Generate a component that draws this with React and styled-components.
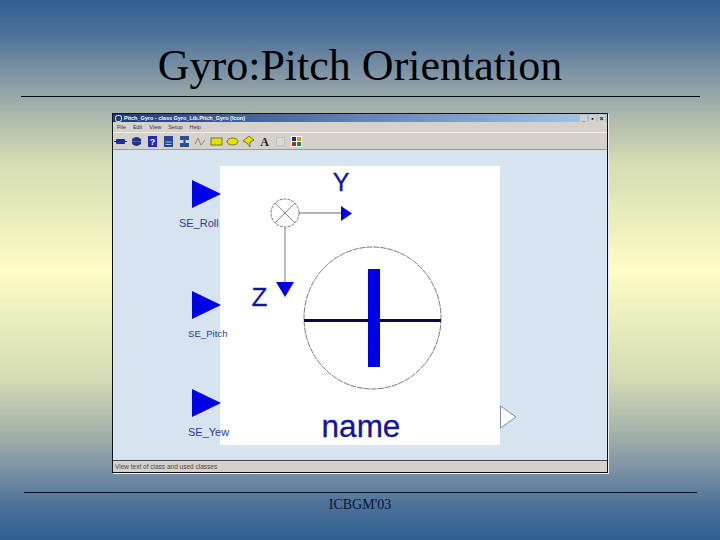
import React from "react";
import styled, { createGlobalStyle } from "styled-components";

const GlobalStyle = createGlobalStyle`
  html, body {
    margin: 0;
    padding: 0;
  }
`;

const Slide = styled.div`
  width: 720px;
  height: 540px;
  overflow: hidden;
  display: flex;
  flex-direction: column;
  align-items: center;
  font-family: "Liberation Serif", serif;
  background-image: linear-gradient(
    180deg,
    #2f6093 0%,
    #4a7098 6%,
    #7b91a4 13%,
    #9aa9a8 18%,
    #d5dcb4 30%,
    #fdfdc4 50%,
    #d5dcb4 70%,
    #9aa9a8 82%,
    #7b91a6 87%,
    #4a7098 94%,
    #2f6093 100%
  );
`;

const Title = styled.h1`
  margin: 0;
  padding-top: 40px;
  height: 56px;
  line-height: 52px;
  box-sizing: content-box;
  font-size: 44px;
  font-weight: 400;
  color: #000;
`;

const Rule = styled.div`
  height: 1px;
  background: #050a1e;
  width: ${(props) => props.$width}px;
  margin-top: ${(props) => props.$top || 0}px;
`;

const Window = styled.div`
  margin-top: 16px;
  width: 496px;
  height: 360px;
  box-sizing: border-box;
  border: 1px solid #10131c;
  display: flex;
  flex-direction: column;
  font-family: "Liberation Sans", sans-serif;
  background: #d6d1ca;
  box-shadow: 1px 1px 0 #eee;
`;

const TitleBar = styled.div`
  height: 8px;
  display: flex;
  align-items: center;
  justify-content: space-between;
  padding: 0 2px;
  background-image: linear-gradient(90deg, #1f3b7a, #a9c9ea);
  color: #fff;
  font-size: 5.5px;
  font-weight: 700;
`;

const TitleText = styled.div`
  display: flex;
  align-items: center;
  gap: 2px;
  white-space: nowrap;
`;

const WindowButtons = styled.div`
  display: flex;
  gap: 2px;
`;

const WindowButton = styled.div`
  width: 7px;
  height: 7px;
  background: #d6d1ca;
  color: #111;
  font-size: 7px;
  font-weight: 700;
  line-height: 7px;
  text-align: center;
`;

const MenuBar = styled.div`
  height: 10px;
  display: flex;
  align-items: center;
  gap: 7px;
  padding-left: 4px;
  color: #333;
  font-size: 5.5px;
  border-bottom: 1px solid #f0eee8;
`;

const ToolBar = styled.div`
  height: 15px;
  padding: 1px 0 0 1px;
  display: flex;
  align-items: center;
  gap: 3px;
  border-bottom: 1px solid #9b9b98;
`;

const ToolButton = styled.div`
  width: 13px;
  height: 13px;
  display: flex;
  align-items: center;
  justify-content: center;
`;

const Canvas = styled.div`
  position: relative;
  flex: 1;
  background: #d7e4f0;
`;

const IconPanel = styled.svg`
  position: absolute;
  left: 107px;
  top: 16px;
  width: 280px;
  height: 279px;
  background: #fff;
  display: block;
`;

const Connector = styled.svg`
  position: absolute;
  left: ${(props) => props.$x}px;
  top: ${(props) => props.$y}px;
  width: 30px;
  height: 30px;
`;

const ConnectorLabel = styled.span`
  position: absolute;
  left: ${(props) => props.$x}px;
  top: ${(props) => props.$y}px;
  font-size: ${(props) => props.$size}px;
  line-height: 12px;
  color: #2b3a9a;
  white-space: nowrap;
`;

const StatusBar = styled.div`
  height: 11px;
  display: flex;
  align-items: center;
  padding-left: 2px;
  border-top: 1px solid #44474c;
  color: #444;
  font-size: 6.5px;
`;

const Footer = styled.div`
  margin-top: 4px;
  font-size: 14px;
  line-height: 16px;
  color: #0b1430;
`;

const inputs = [
  { name: "SE_Roll", y: 30, labelX: 66, labelY: 67, size: 11 },
  { name: "SE_Pitch", y: 141, labelX: 75, labelY: 178, size: 9.6 },
  { name: "SE_Yew", y: 239, labelX: 75, labelY: 276, size: 11 },
];

const GlyphText = styled.text`
  font-family: "Liberation Sans", sans-serif;
  font-size: ${(props) => props.$size}px;
  fill: #14149a;
  stroke: #14149a;
  stroke-width: 0.3;
  text-anchor: middle;
`;

const ToolGlyph = styled.text`
  font-family: ${(props) => (props.$serif ? '"Liberation Serif", serif' : '"Liberation Sans", sans-serif')};
  font-size: ${(props) => props.$size}px;
  font-weight: 700;
  fill: ${(props) => props.$color};
  text-anchor: middle;
`;

const tools = [
  <g key="connector">
    <path d="M0 6.5 H13" stroke="#1a2a9a" />
    <rect x="2" y="4" width="9" height="5" rx="1" fill="#1a2a9a" />
  </g>,
  <g key="barrel">
    <path d="M2 4 Q6.5 0 11 4 V9 Q6.5 13 2 9 Z" fill="#1f3590" />
    <path d="M2 6.5 H11" stroke="#5f78c0" strokeWidth="0.6" />
  </g>,
  <g key="info">
    <rect x="2" y="1" width="9" height="11" fill="#1c2ac0" />
    <ToolGlyph x="6.5" y="10" $size={9} $color="#fff">?</ToolGlyph>
  </g>,
  <g key="doc">
    <rect x="2" y="1" width="9" height="11" fill="#24459c" />
    <path d="M3.5 7 H9.5 M3.5 9.5 H9.5" stroke="#cfd8f0" strokeWidth="0.8" />
  </g>,
  <g key="tree">
    <rect x="2" y="1" width="9" height="4" fill="#26508f" />
    <rect x="2" y="8" width="9" height="4" fill="#26508f" />
    <path d="M6.5 5 V8" stroke="#26508f" strokeWidth="2" />
  </g>,
  <polyline key="wave" points="1,9 4,3 7,10 11,5" fill="none" stroke="#888" />,
  <rect key="rect" x="1" y="3" width="11" height="7" fill="#e8e000" stroke="#333" strokeWidth="0.6" />,
  <ellipse key="ellipse" cx="6.5" cy="6.5" rx="5.5" ry="3.5" fill="#e8e000" stroke="#333" strokeWidth="0.6" />,
  <path key="poly" d="M1 6 L7 1 L12 5 L8 7 L8 12 L5 8 Z" fill="#e8e000" stroke="#333" strokeWidth="0.6" />,
  <ToolGlyph key="text" x="6.5" y="11" $size={12} $serif $color="#222">A</ToolGlyph>,
  <rect key="grid" x="2.5" y="2.5" width="8" height="8" fill="#dcdcd6" stroke="#aaa" strokeDasharray="1 1" />,
  <g key="colors">
    <rect x="1" y="1" width="11" height="11" fill="#fff" />
    <rect x="2" y="2" width="4" height="4" fill="#1c2a6a" />
    <rect x="7" y="2" width="4" height="4" fill="#c9a020" />
    <rect x="2" y="7" width="4" height="4" fill="#b03020" />
    <rect x="7" y="7" width="4" height="4" fill="#208050" />
  </g>,
];

export default function App() {
  return (
    <>
      <GlobalStyle />
      <Slide>
        <Title>Gyro:Pitch Orientation</Title>
        <Rule $width={679} />
        <Window>
          <TitleBar>
            <TitleText>
              <svg width="7" height="7" viewBox="0 0 7 7">
                <rect x="0.5" y="0.5" width="6" height="6" rx="2" fill="none" stroke="#cfe" />
              </svg>
              Pitch_Gyro - class Gyro_Lib.Pitch_Gyro (Icon)
            </TitleText>
            <WindowButtons>
              <WindowButton>_</WindowButton>
              <WindowButton>▪</WindowButton>
              <WindowButton>×</WindowButton>
            </WindowButtons>
          </TitleBar>
          <MenuBar>
            <span>File</span>
            <span>Edit</span>
            <span>View</span>
            <span>Setup</span>
            <span>Help</span>
          </MenuBar>
          <ToolBar>
            {tools.map((tool) => (
              <ToolButton key={tool.key}>
                <svg width="13" height="13" viewBox="0 0 13 13">{tool}</svg>
              </ToolButton>
            ))}
          </ToolBar>
          <Canvas>
            <IconPanel viewBox="0 0 280 279">
              <circle cx="65" cy="47" r="14" fill="none" stroke="#777" strokeDasharray="3 1" />
              <path d="M55 37 L75 57 M75 37 L55 57" stroke="#888" />
              <path d="M79 47 H121" stroke="#667" />
              <polygon points="121,40 132,47.5 121,55" fill="#0000e6" />
              <path d="M65 61 V116" stroke="#778" />
              <polygon points="56,116 74,116 65,131" fill="#0000e6" />
              <GlyphText x="121" y="25" $size={25}>Y</GlyphText>
              <GlyphText x="39.5" y="140" $size={26}>Z</GlyphText>
              <ellipse cx="152.5" cy="152" rx="68.5" ry="71" fill="none" stroke="#777" strokeDasharray="6 1" />
              <rect x="84" y="153" width="137" height="3" fill="#0a0a3a" />
              <rect x="148" y="103" width="12" height="98" fill="#0000e6" />
              <GlyphText x="141" y="271" $size={31.5}>name</GlyphText>
            </IconPanel>
            {inputs.map((input) => (
              <React.Fragment key={input.name}>
                <Connector $x={79} $y={input.y} viewBox="0 0 30 30">
                  <polygon points="0,0 29,14 0,28" fill="#0000e6" />
                </Connector>
                <ConnectorLabel $x={input.labelX} $y={input.labelY} $size={input.size}>
                  {input.name}
                </ConnectorLabel>
              </React.Fragment>
            ))}
            <Connector $x={387} $y={255} viewBox="0 0 30 30">
              <polygon points="0.5,1 16,12 0.5,23" fill="#fff" stroke="#7a8ab0" />
            </Connector>
          </Canvas>
          <StatusBar>View text of class and used classes</StatusBar>
        </Window>
        <Rule $width={673} $top={19} />
        <Footer>ICBGM'03</Footer>
      </Slide>
    </>
  );
}
